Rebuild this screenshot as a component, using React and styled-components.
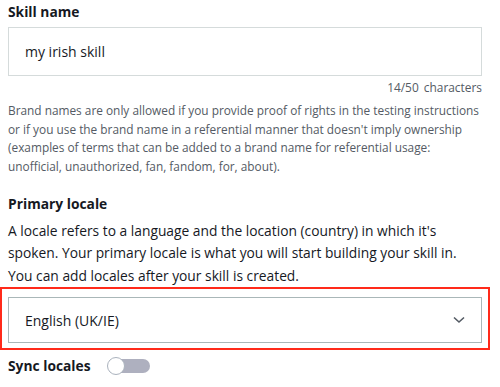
import React from "react";
import styled, { createGlobalStyle } from "styled-components";

const Global = createGlobalStyle`
  html, body { margin: 0; padding: 0; background: #ffffff; }
  body { font-family: "Open Sans", "Noto Sans", sans-serif; color: #16191f; }
`;

const Page = styled.div`
  width: 490px;
  display: flex;
  flex-direction: column;
`;

const Section = styled.div`
  padding: 0 8px;
  display: flex;
  flex-direction: column;
`;

const Label = styled.div`
  font-size: 13.8px;
  font-weight: 700;
  line-height: 20px;
  color: #16191f;
  margin-top: ${(p) => p.$mt || 0}px;
`;

const Field = styled.div`
  box-sizing: border-box;
  height: ${(p) => p.$h}px;
  margin-top: ${(p) => p.$mt || 0}px;
  border: 1px solid ${(p) => p.$border};
  display: flex;
  align-items: center;
  justify-content: space-between;
  padding: 0 16px 0 16px;
  font-size: 14px;
  color: #16191f;
`;

const Counter = styled.div`
  text-align: right;
  font-size: 11.9px;
  line-height: 16px;
  color: #545b64;
  margin-top: 3px;
  word-spacing: 2px;
`;

const Hint = styled.p`
  margin: 6px 0 0;
  font-size: 11.85px;
  line-height: 18.7px;
  color: #545b64;
  white-space: nowrap;
`;

const Desc = styled.p`
  margin: 6px 0 0;
  font-size: 13.8px;
  line-height: 22.5px;
  color: #16191f;
  white-space: nowrap;
`;

const Highlight = styled.div`
  margin-top: 0;
  border: 2px solid #ff2a1a;
  padding: 8px 6px 5px 6px;
`;

const SyncRow = styled.div`
  display: flex;
  align-items: center;
  gap: 17px;
  padding: 6px 8px 0;
`;

const Toggle = styled.div`
  position: relative;
  width: 42px;
  height: 14px;
  border-radius: 7px;
  background: #aeb0bf;
`;

const Knob = styled.div`
  position: absolute;
  left: -1px;
  top: -2px;
  width: 16px;
  height: 16px;
  border-radius: 50%;
  background: #fff;
  border: 1px solid #aab2bd;
`;

const Chevron = () => (
  <svg width="12" height="8" viewBox="0 0 12 8" fill="none">
    <path d="M1 1.5 L6 6 L11 1.5" stroke="#545b64" strokeWidth="1.6" />
  </svg>
);

export default function App() {
  return (
    <Page>
      <Global />
      <Section>
        <Label $mt={2}>Skill name</Label>
        <Field $h={49} $mt={5} $border="#d5dbdb">my irish skill</Field>
        <Counter>14/50 characters</Counter>
        <Hint>
          Brand names are only allowed if you provide proof of rights in the testing instructions
          <br />
          or if you use the brand name in a referential manner that doesn't imply ownership
          <br />
          (examples of terms that can be added to a brand name for referential usage:
          <br />
          unofficial, unauthorized, fan, fandom, for, about).
        </Hint>
        <Label $mt={18}>Primary locale</Label>
        <Desc>
          A locale refers to a language and the location (country) in which it's
          <br />
          spoken. Your primary locale is what you will start building your skill in.
          <br />
          You can add locales after your skill is created.
        </Desc>
      </Section>
      <Highlight>
        <Field $h={46} $border="#aab7b8">
          English (UK/IE)
          <Chevron />
        </Field>
      </Highlight>
      <SyncRow>
        <Label>Sync locales</Label>
        <Toggle>
          <Knob />
        </Toggle>
      </SyncRow>
    </Page>
  );
}
